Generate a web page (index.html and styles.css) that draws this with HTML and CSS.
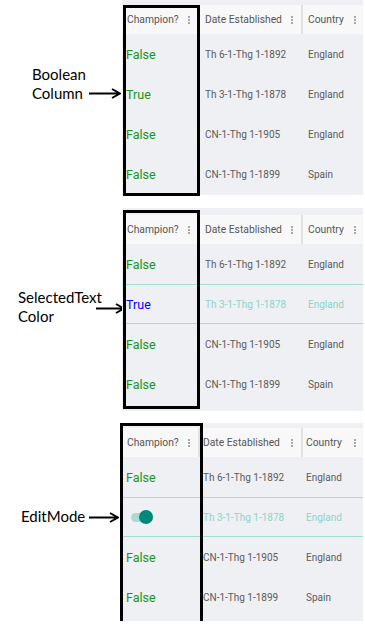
FILE: index.html
```html
<!DOCTYPE html>
<html lang="en">
<head>
    <meta charset="UTF-8">
    <meta name="viewport" content="width=device-width, initial-scale=1.0">
    <title>Boolean Column</title>
    <link rel="stylesheet" href="styles.css">
</head>
<body>
    <div class="page">
        <section class="panel panel-bool">
            <div class="note">
                <span class="note-text">Boolean<br>Column</span>
                <svg class="arrow" width="32" height="19" viewBox="0 0 32 19"><path d="M0 9.5H31M23 5L31 9.5L23 14" fill="none" stroke="#000" stroke-width="2"/></svg>
            </div>
            <div class="grid">
                <div class="head">
                    <div class="head-cell"><span>Champion?</span><i class="kebab"></i></div>
                    <div class="head-cell"><span>Date Established</span><i class="kebab"></i></div>
                    <div class="head-cell"><span>Country</span><i class="kebab"></i></div>
                </div>
                <div class="row"><div class="cell bool">False</div><div class="cell">Th 6-1-Thg 1-1892</div><div class="cell">England</div></div>
                <div class="row"><div class="cell bool">True</div><div class="cell">Th 3-1-Thg 1-1878</div><div class="cell">England</div></div>
                <div class="row"><div class="cell bool">False</div><div class="cell">CN-1-Thg 1-1905</div><div class="cell">England</div></div>
                <div class="row"><div class="cell bool">False</div><div class="cell">CN-1-Thg 1-1899</div><div class="cell">Spain</div></div>
                <div class="highlight"></div>
            </div>
        </section>

        <section class="panel panel-sel">
            <div class="note">
                <span class="note-text">SelectedText<br>Color</span>
                <svg class="arrow" width="29" height="19" viewBox="0 0 29 19"><path d="M0 9.5H28M20 5L28 9.5L20 14" fill="none" stroke="#000" stroke-width="2"/></svg>
            </div>
            <div class="grid">
                <div class="head">
                    <div class="head-cell"><span>Champion?</span><i class="kebab"></i></div>
                    <div class="head-cell"><span>Date Established</span><i class="kebab"></i></div>
                    <div class="head-cell"><span>Country</span><i class="kebab"></i></div>
                </div>
                <div class="row"><div class="cell bool">False</div><div class="cell">Th 6-1-Thg 1-1892</div><div class="cell">England</div></div>
                <div class="row selected"><div class="cell bool picked">True</div><div class="cell">Th 3-1-Thg 1-1878</div><div class="cell">England</div></div>
                <div class="row"><div class="cell bool">False</div><div class="cell">CN-1-Thg 1-1905</div><div class="cell">England</div></div>
                <div class="row"><div class="cell bool">False</div><div class="cell">CN-1-Thg 1-1899</div><div class="cell">Spain</div></div>
                <div class="highlight"></div>
            </div>
        </section>

        <section class="panel panel-edit">
            <div class="note">
                <span class="note-text">EditMode</span>
                <svg class="arrow" width="30" height="19" viewBox="0 0 30 19"><path d="M0 9.5H29M21 5L29 9.5L21 14" fill="none" stroke="#000" stroke-width="2"/></svg>
            </div>
            <div class="grid">
                <div class="head">
                    <div class="head-cell"><span>Champion?</span><i class="kebab"></i></div>
                    <div class="head-cell"><span>Date Established</span><i class="kebab"></i></div>
                    <div class="head-cell"><span>Country</span><i class="kebab"></i></div>
                </div>
                <div class="row"><div class="cell bool">False</div><div class="cell">Th 6-1-Thg 1-1892</div><div class="cell">England</div></div>
                <div class="row selected"><div class="cell bool"><span class="toggle"></span></div><div class="cell">Th 3-1-Thg 1-1878</div><div class="cell">England</div></div>
                <div class="row"><div class="cell bool">False</div><div class="cell">CN-1-Thg 1-1905</div><div class="cell">England</div></div>
                <div class="row"><div class="cell bool">False</div><div class="cell">CN-1-Thg 1-1899</div><div class="cell">Spain</div></div>
                <div class="highlight"></div>
            </div>
        </section>
    </div>
</body>
</html>
```

FILE: styles.css
```css
body { margin: 0; background: #fff; font-family: Roboto, "Liberation Sans", sans-serif; }
.page { display: flex; flex-direction: column; width: 365px; }
.panel { display: flex; }
.panel-sel { margin-top: 13px; }
.panel-edit { margin-top: 12px; }

.note { width: 122px; flex-shrink: 0; box-sizing: border-box; display: flex; align-items: flex-start; font-family: Lato, "Open Sans", sans-serif; font-size: 15px; line-height: 19px; color: #000; }
.note-text { white-space: nowrap; }
.arrow { flex-shrink: 0; margin-left: auto; }
.panel-bool .note { padding: 65px 1px 0 32px; }
.panel-bool .arrow { margin-top: 19px; }
.panel-sel .note { padding: 79.5px 0 0 18px; }
.panel-sel .arrow { margin-top: 11px; margin-left: -6px; }
.panel-edit .note { padding: 83.5px 3px 0 21px; }
.panel-edit .arrow { margin-top: 1px; }

.grid { position: relative; width: 241px; background: #eef0f3; }
.panel-bool .grid { padding: 5px 0 1px; }
.panel-sel .grid { padding: 7px 0 7px; }
.panel-edit .grid { padding: 5px 0 4px; }

.head, .row { display: grid; grid-template-columns: 78px 103px 60px; }
.head { height: 29px; background: #f8f8f8; }
.head-cell { display: flex; align-items: center; justify-content: space-between; padding: 0 8px 0 5px; border-right: 2px solid #e2e2e2; font-size: 10.3px; color: #555; }
.head-cell:last-child { border-right: none; padding-right: 7px; }
.kebab { width: 2px; height: 2px; border-radius: 50%; background: #8e8e8e; box-shadow: 0 -3px 0 #8e8e8e, 0 3px 0 #8e8e8e; }

.row { height: 40px; box-sizing: border-box; align-items: center; }
.row.selected { border-top: 1px solid #a6dbd4; border-bottom: 1px solid #a6dbd4; }
.cell { padding-left: 5px; font-size: 10px; color: #5c5c5c; white-space: nowrap; }
.selected .cell { color: #8fd3c9; }
.cell.bool { padding-left: 4px; font-size: 12.5px; color: #179417; }
.selected .cell.picked { color: #0000ff; }
.panel-edit .cell + .cell, .panel-edit .head-cell + .head-cell { padding-left: 3px; }

.toggle { position: relative; display: block; width: 22px; height: 9px; margin-left: 5px; border-radius: 5px; background: #a9dad3; }
.toggle::after { content: ""; position: absolute; right: 0; top: -2.5px; width: 14px; height: 14px; border-radius: 50%; background: #00897b; }

.highlight { position: absolute; box-sizing: border-box; border: 3px solid #000; pointer-events: none; }
.panel-bool .highlight { left: 1px; top: 5px; width: 77px; height: 191px; }
.panel-sel .highlight { left: 1px; top: 2px; width: 77px; height: 199px; }
.panel-edit .highlight { left: -2px; top: 0; width: 83px; height: 202px; }
```
